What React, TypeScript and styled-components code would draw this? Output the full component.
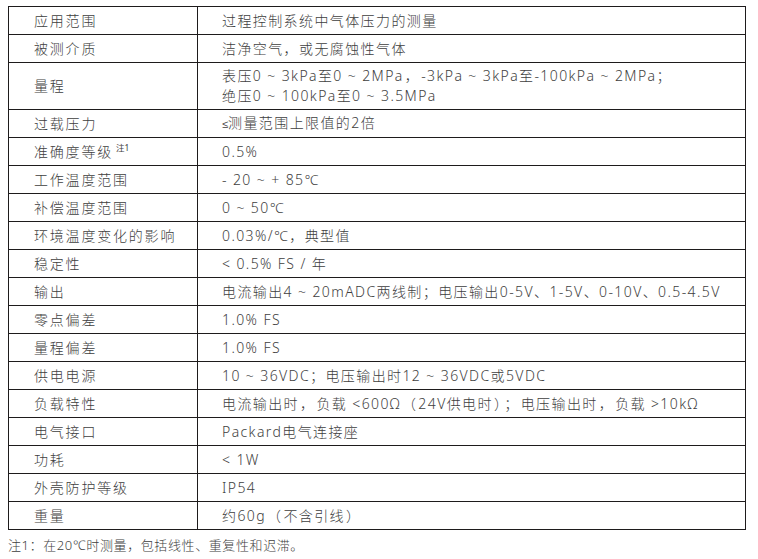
import React from "react";
import styled, { createGlobalStyle } from "styled-components";

const Global = createGlobalStyle`
  html, body { margin: 0; padding: 0; background: #fff; }
  body {
    font-family: "Noto Sans", "Noto Sans CJK SC", sans-serif;
    color: #3e3e3e;
  }
`;

const Page = styled.div`
  padding: 6px 0 0 8px;
  width: 738px;
`;

const Table = styled.table`
  width: 738px;
  border-collapse: collapse;
  table-layout: fixed;
  font-size: 14px;
  font-weight: 300;
  letter-spacing: 1.4px;
`;

const Row = styled.tr<{ $tall?: boolean }>`
  height: ${(p) => (p.$tall ? 47 : 28)}px;
`;

const Cell = styled.td<{ $label?: boolean }>`
  border: 1px solid #1e1b1c;
  padding: 0 0 0 ${(p) => (p.$label ? 25 : 24)}px;
  vertical-align: middle;
  line-height: 20px;
  white-space: nowrap;
  letter-spacing: ${(p) => (p.$label ? "1.8px" : "inherit")};
`;

const Punct = styled.span`
  margin: 0 1px;
`;

const Sym = styled.span`
  font-family: "DejaVu Sans", sans-serif;
  font-size: 11px;
  letter-spacing: 0;
`;

const Sup = styled.sup`
  font-size: 8.5px;
  letter-spacing: 0;
  vertical-align: 6px;
  line-height: 0;
  margin-left: 3px;
  font-weight: 400;
`;

const Note = styled.div`
  margin-top: 5px;
  font-size: 13px;
  font-weight: 300;
  letter-spacing: 0.6px;
  line-height: 20px;
`;

type RowData = { label: React.ReactNode; value: React.ReactNode; tall?: boolean };

const P = ({ c }: { c: string }) => <Punct>{c}</Punct>;

const rows: RowData[] = [
  { label: "应用范围", value: "过程控制系统中气体压力的测量" },
  { label: "被测介质", value: "洁净空气，或无腐蚀性气体" },
  {
    label: "量程",
    tall: true,
    value: (
      <>
        表压0 ~ 3kPa至0 ~ 2MPa<P c="，" />-3kPa ~ 3kPa至-100kPa ~ 2MPa；
        <br />
        绝压0 ~ 100kPa至0 ~ 3.5MPa
      </>
    ),
  },
  {
    label: "过载压力",
    value: (
      <>
        <Sym>≤</Sym>测量范围上限值的2倍
      </>
    ),
  },
  {
    label: (
      <>
        准确度等级<Sup>注1</Sup>
      </>
    ),
    value: "0.5%",
  },
  { label: "工作温度范围", value: "- 20 ~ + 85℃" },
  { label: "补偿温度范围", value: "0 ~ 50℃" },
  { label: "环境温度变化的影响", value: "0.03%/℃，典型值" },
  { label: "稳定性", value: "< 0.5% FS / 年" },
  { label: "输出", value: "电流输出4 ~ 20mADC两线制；电压输出0-5V、1-5V、0-10V、0.5-4.5V" },
  { label: "零点偏差", value: "1.0% FS" },
  { label: "量程偏差", value: "1.0% FS" },
  { label: "供电电源", value: "10 ~ 36VDC；电压输出时12 ~ 36VDC或5VDC" },
  {
    label: "负载特性",
    value: (
      <>
        电流输出时<P c="，" />负载 &lt;600Ω<P c="（" />24V供电时<P c="）" />
        <P c="；" />电压输出时<P c="，" />负载 &gt;10kΩ
      </>
    ),
  },
  { label: "电气接口", value: "Packard电气连接座" },
  { label: "功耗", value: "< 1W" },
  { label: "外壳防护等级", value: "IP54" },
  {
    label: "重量",
    value: (
      <>
        约60g<P c="（" />不含引线<P c="）" />
      </>
    ),
  },
];

export default function App() {
  return (
    <>
      <Global />
      <Page>
        <Table>
          <colgroup>
            <col style={{ width: 189 }} />
            <col />
          </colgroup>
          <tbody>
            {rows.map((r, i) => (
              <Row key={i} $tall={r.tall}>
                <Cell $label>{r.label}</Cell>
                <Cell>{r.value}</Cell>
              </Row>
            ))}
          </tbody>
        </Table>
        <Note>注1：在20℃时测量，包括线性、重复性和迟滞。</Note>
      </Page>
    </>
  );
}
